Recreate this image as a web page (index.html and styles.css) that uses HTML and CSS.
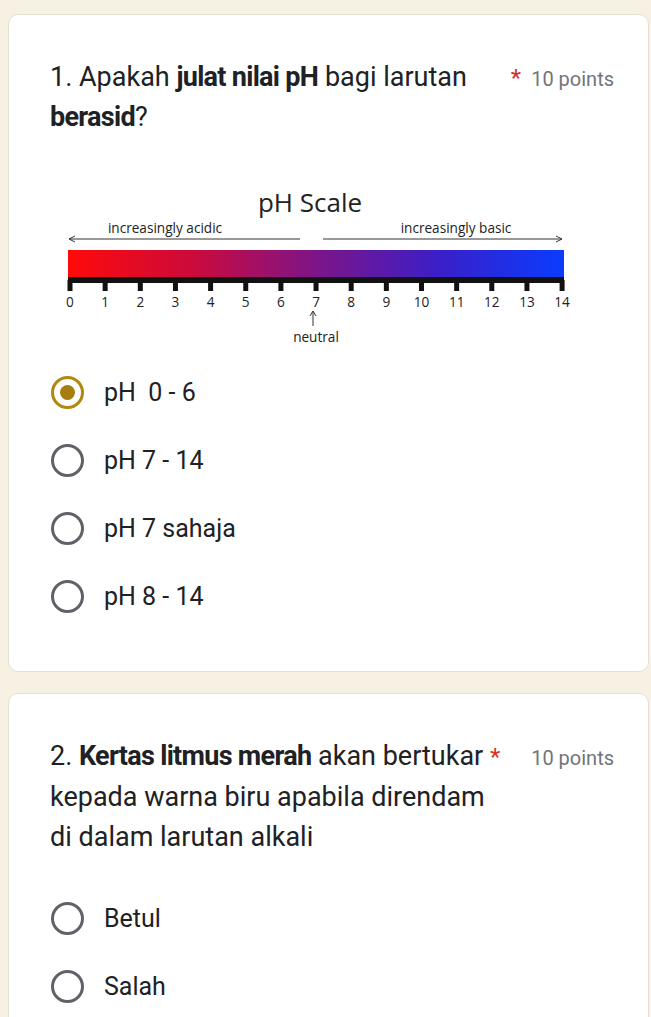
FILE: index.html
```html
<!DOCTYPE html>
<html>

<head>
    <meta charset="utf-8">
    <title>Kuiz pH</title>
    <link rel="stylesheet" href="styles.css">
</head>

<body>
    <div class="card">
        <div class="qhead">
            <div class="qtitle">1. Apakah <b>julat nilai pH</b> bagi larutan<br><b>berasid</b>?</div>
            <div class="qside"><span class="req">*</span><span class="points">10 points</span></div>
        </div>

        <svg class="scale" width="530" height="172" viewBox="0 0 530 172">
            <defs>
                <linearGradient id="phgrad" x1="0" y1="0" x2="1" y2="0">
                    <stop offset="0" stop-color="#ff0a0a" />
                    <stop offset="0.25" stop-color="#cc0a3c" />
                    <stop offset="0.5" stop-color="#7d1588" />
                    <stop offset="0.75" stop-color="#3a1fc8" />
                    <stop offset="1" stop-color="#0a3cff" />
                </linearGradient>
            </defs>
            <text class="sc-title" x="260" y="32" text-anchor="middle">pH Scale</text>
            <text class="sc-small" x="115" y="53" text-anchor="middle">increasingly acidic</text>
            <text class="sc-small" x="406" y="53" text-anchor="middle">increasingly basic</text>

            <line x1="19" y1="59" x2="250" y2="59" class="sc-line" />
            <polyline points="25,56 19,59 25,62" class="sc-line" />
            <line x1="273" y1="59" x2="512" y2="59" class="sc-line" />
            <polyline points="506,56 512,59 506,62" class="sc-line" />

            <rect x="18" y="70" width="496" height="28" fill="url(#phgrad)" />
            <rect x="18" y="97" width="496" height="6" fill="#111" />
            <g id="ticks" fill="#111"></g>
            <g id="nums" class="sc-num" text-anchor="middle"></g>

            <line x1="263" y1="146" x2="263" y2="132" class="sc-line" />
            <polyline points="260,136 263,131 266,136" class="sc-line" />
            <text class="sc-small" x="266" y="162" text-anchor="middle">neutral</text>
        </svg>

        <div class="options">
            <div class="opt">
                <span class="radio on"></span>
                <span class="label">pH&nbsp; 0 - 6</span>
            </div>
            <div class="opt">
                <span class="radio"></span>
                <span class="label">pH 7 - 14</span>
            </div>
            <div class="opt">
                <span class="radio"></span>
                <span class="label">pH 7 sahaja</span>
            </div>
            <div class="opt">
                <span class="radio"></span>
                <span class="label">pH 8 - 14</span>
            </div>
        </div>
    </div>

    <div class="card second">
        <div class="qhead">
            <div class="qtitle">2. <b>Kertas litmus merah</b> akan bertukar <span class="req">*</span><br>kepada warna biru apabila direndam<br>di dalam larutan alkali</div>
            <div class="qside"><span class="points">10 points</span></div>
        </div>

        <div class="options">
            <div class="opt">
                <span class="radio"></span>
                <span class="label">Betul</span>
            </div>
            <div class="opt">
                <span class="radio"></span>
                <span class="label">Salah</span>
            </div>
        </div>
    </div>

    <script>
        var ticks = document.getElementById("ticks");
        var nums = document.getElementById("nums");
        var svgns = "http://www.w3.org/2000/svg";
        for (var i = 0; i <= 14; i++) {
            var x = 20 + i * 35.15;
            var r = document.createElementNS(svgns, "rect");
            r.setAttribute("x", x - 2.5);
            r.setAttribute("y", 100);
            r.setAttribute("width", 5);
            r.setAttribute("height", 11);
            ticks.appendChild(r);
            var t = document.createElementNS(svgns, "text");
            t.setAttribute("x", x);
            t.setAttribute("y", 127);
            t.textContent = i;
            nums.appendChild(t);
        }
    </script>
</body>

</html>
```

FILE: styles.css
```css
body {
    margin: 0;
    padding: 14px 2px 0 8px;
    background-color: #f6f1e3;
    font-family: Roboto, "Noto Sans", sans-serif;
    color: #202124;
}

.card {
    background-color: #ffffff;
    border: 1px solid #e4dfd3;
    border-radius: 10px;
    padding: 42px 34px 40px 41px;
    height: 574px;
}

.second {
    margin-top: 21px;
    height: 300px;
}

.qhead {
    display: flex;
    align-items: baseline;
}

.qtitle {
    flex: 1;
    font-size: 27px;
    line-height: 40px;
}

.qtitle b {
    font-weight: 700;
    letter-spacing: -0.7px;
}

.qside {
    display: flex;
    align-items: baseline;
}

.req {
    color: #d93025;
    font-size: 24px;
    margin-right: 10px;
}

.qtitle .req {
    margin-right: 0;
}

.points {
    font-size: 20px;
    color: #70757a;
}

.scale {
    display: block;
    margin-top: 43px;
}

.sc-title {
    font-family: "Open Sans", sans-serif;
    font-size: 26px;
    fill: #222;
}

.sc-small {
    font-family: "Open Sans", sans-serif;
    font-size: 13.6px;
    fill: #222;
}

.sc-num {
    font-family: "Open Sans", sans-serif;
    font-size: 13.6px;
    fill: #222;
}

.sc-line {
    stroke: #333;
    stroke-width: 1;
    fill: none;
}

.options {
    margin-top: 6px;
}

.second .options {
    margin-top: 27px;
}

.opt {
    display: flex;
    align-items: center;
    height: 68px;
}

.radio {
    box-sizing: border-box;
    width: 33px;
    height: 33px;
    margin-left: 1px;
    border: 3px solid #5f6368;
    border-radius: 50%;
    display: flex;
    align-items: center;
    justify-content: center;
}

.radio.on {
    border-color: #b08912;
}

.radio.on::after {
    content: "";
    width: 15px;
    height: 15px;
    border-radius: 50%;
    background-color: #a87d0f;
}

.label {
    margin-left: 20px;
    font-size: 25px;
}
```
